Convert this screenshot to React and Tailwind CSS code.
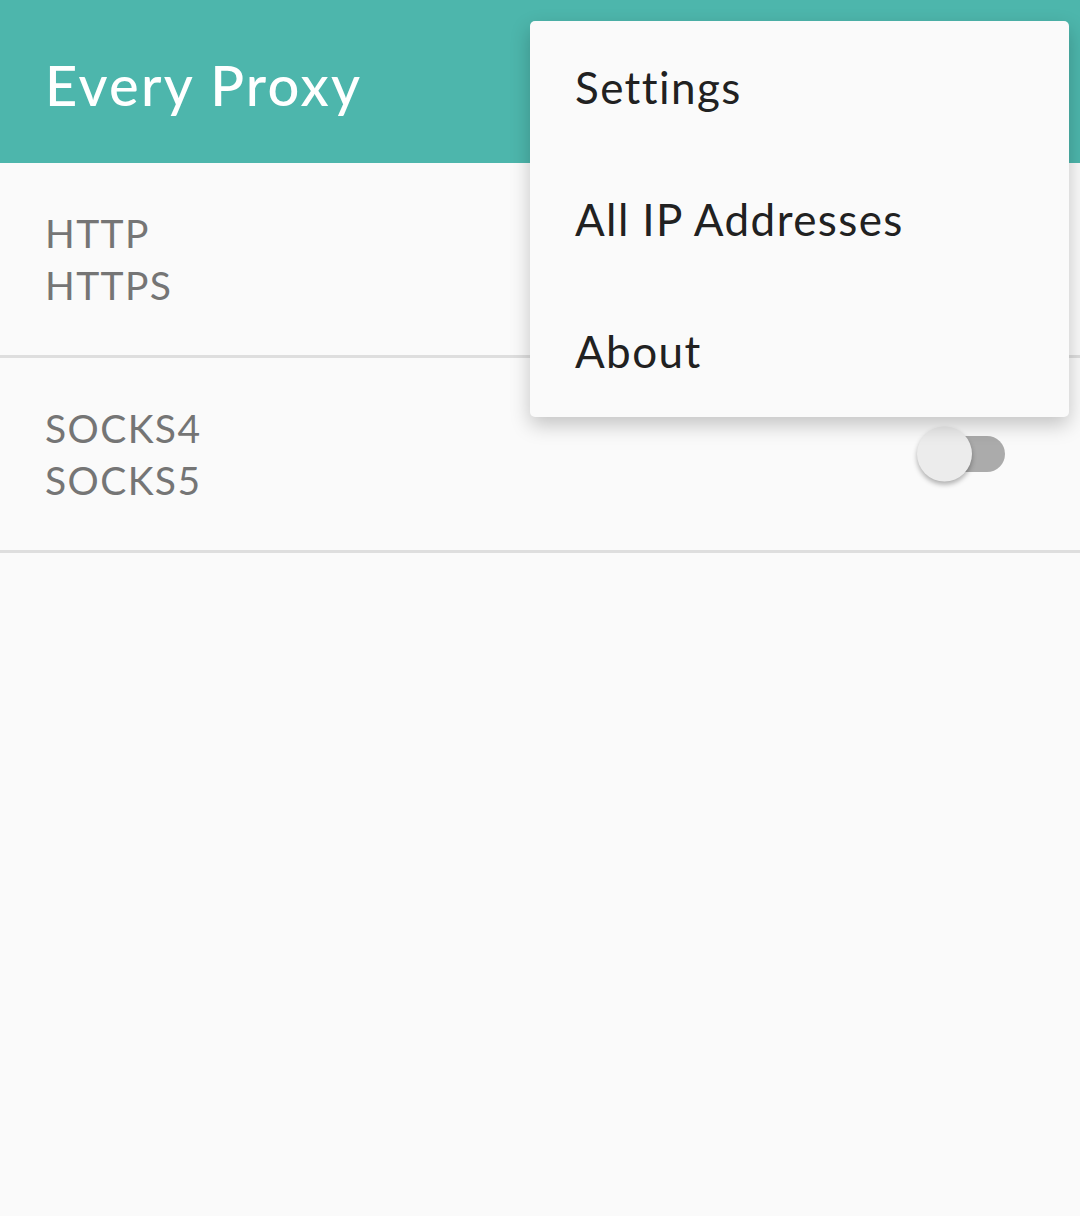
import React, { useState } from 'react';

const font = { fontFamily: 'Lato, "Noto Sans", sans-serif' };

function Toggle({ on, onChange }) {
  return (
    <button
      type="button"
      onClick={() => onChange(!on)}
      className="relative w-[85px] h-[36px] rounded-full bg-[#ababab] shrink-0"
    >
      <span className="absolute left-[-3px] top-1/2 -translate-y-1/2 w-[55px] h-[55px] rounded-full bg-[#ececec] shadow-[0_3px_5px_rgba(0,0,0,0.3)]" />
    </button>
  );
}

function ProxyRow({ lines, on, onChange }) {
  return (
    <div className="h-[195px] flex items-center justify-between pl-[45px] pr-[75px] border-b-[3px] border-[#dedede]">
      <div className="text-[39px] leading-[52px] tracking-[1.4px] text-[#757575]">
        {lines.map((l) => (
          <div key={l}>{l}</div>
        ))}
      </div>
      <Toggle on={on} onChange={onChange} />
    </div>
  );
}

export default function App() {
  const [http, setHttp] = useState(false);
  const [socks, setSocks] = useState(false);

  return (
    <div
      className="relative w-[1080px] h-[1216px] bg-[#fafafa] overflow-hidden [font-variant-ligatures:none]"
      style={font}
    >
      {/* Toolbar */}
      <div className="h-[163px] bg-[#4db6ac] flex items-center pl-[45px]">
        <h1 className="text-[56px] font-medium tracking-[2.3px] text-white leading-none pt-[6px]">Every Proxy</h1>
      </div>

      <ProxyRow lines={['HTTP', 'HTTPS']} on={http} onChange={setHttp} />
      <ProxyRow lines={['SOCKS4', 'SOCKS5']} on={socks} onChange={setSocks} />

      {/* Overflow menu */}
      <div className="absolute left-[530px] top-[21px] w-[539px] bg-[#fafafa] rounded-[5px] shadow-[0_8px_20px_rgba(0,0,0,0.22)]">
        {['Settings', 'All IP Addresses', 'About'].map((item) => (
          <div
            key={item}
            className="h-[132px] flex items-center pl-[45px] text-[44px] tracking-[1.4px] text-[#212121]"
          >
            {item}
          </div>
        ))}
      </div>
    </div>
  );
}
